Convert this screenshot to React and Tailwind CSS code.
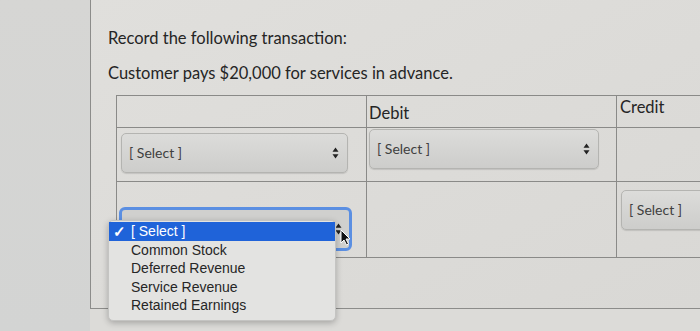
import React from "react";

const Arrows = ({ color = "#222" }) => (
  <svg width="7" height="12" viewBox="0 0 7 12" className="shrink-0">
    <path d="M3.5 0.5 L6.5 4.8 H0.5Z M3.5 11.5 L6.5 7.2 H0.5Z" fill={color} />
  </svg>
);

function SelectBox({ className = "", arrows = true }) {
  return (
    <div
      className={`flex items-center justify-between rounded-[5px] border border-[#b4b4b1] bg-gradient-to-b from-[#dcdcda] to-[#cdcdcb] shadow-[0_1px_1px_rgba(0,0,0,0.12)] pl-[7px] pr-[8px] ${className}`}
    >
      <span className="text-[14px] leading-none text-[#404040]">[ Select ]</span>
      {arrows && <Arrows />}
    </div>
  );
}

export default function App() {
  const items = ["Common Stock", "Deferred Revenue", "Service Revenue", "Retained Earnings"];
  return (
    <div className="relative flex h-[331px] w-[700px] overflow-hidden bg-[#dcdbd8] font-[Lato,'Liberation_Sans',sans-serif]">
      <div className="w-[90px] shrink-0 bg-gradient-to-b from-[#d6d6d4] to-[#d3d4d3]" />
      <div className="flex min-w-0 flex-1 flex-col">
        <div className="flex h-[309px] flex-col border-b border-l border-[#8c8c8a] bg-gradient-to-br from-[#e0dfdc] to-[#d9d8d5]">
          <div className="pl-[17px] pt-[28px] text-[16.5px] leading-[20px] text-[#252525]">
            <p>Record the following transaction:</p>
            <p className="mt-[15px]">Customer pays $20,000 for services in advance.</p>
          </div>
          <div className="ml-[25px] mt-[12px] w-[640px] border-l border-t border-[#8a8a88]">
            {/* header */}
            <div className="flex h-[32px]">
              <div className="w-[250px] border-b border-r border-[#8a8a88]" />
              <div className="w-[250px] border-b border-r border-[#8a8a88] pl-[2px] pt-[7px] text-[16.5px] leading-[20px] text-[#252525]">
                Debit
              </div>
              <div className="flex-1 border-b border-[#8a8a88] pl-[3px] pt-[1px] text-[16.5px] leading-[20px] text-[#252525]">
                Credit
              </div>
            </div>
            {/* row 1 */}
            <div className="flex h-[54px]">
              <div className="w-[250px] border-b border-r border-[#8a8a88] pl-[4px] pt-[5px]">
                <SelectBox className="h-[40px] w-[227px]" />
              </div>
              <div className="w-[250px] border-b border-r border-[#8a8a88] pl-[2px] pt-[1px]">
                <SelectBox className="h-[40px] w-[230px]" />
              </div>
              <div className="flex-1 border-b border-[#8a8a88]" />
            </div>
            {/* row 2 */}
            <div className="flex h-[76px]">
              <div className="w-[250px] border-b border-r border-[#8a8a88] pl-[2px] pt-[25px]">
                <div className="flex h-[44px] w-[233px] items-center justify-end rounded-[6px] border-[3px] border-[#5b8fe2] bg-[#d0d0ce] pr-[7px]">
                  <Arrows />
                </div>
              </div>
              <div className="w-[250px] border-b border-r border-[#8a8a88]" />
              <div className="flex-1 border-b border-[#8a8a88] pl-[4px] pt-[8px]">
                <SelectBox className="h-[40px] w-[120px]" arrows={false} />
              </div>
            </div>
          </div>
        </div>
      </div>

      {/* open dropdown menu */}
      <div className="absolute left-[108px] top-[220px] h-[101px] w-[228px] rounded-[5px] border border-[#c4c4c2] bg-[#e3e3e1] pt-[1px] shadow-[0_2px_6px_rgba(0,0,0,0.25)] font-['Liberation_Sans',Arial,sans-serif] text-[14px] text-[#262626]">
        <div className="flex h-[18.5px] items-center bg-[#1f63d9] text-white">
          <span className="w-[22px] pl-[4px] text-[15px] font-bold leading-none">✓</span>
          <span className="leading-none">[ Select ]</span>
        </div>
        {items.map((t) => (
          <div key={t} className="flex h-[18.5px] items-center pl-[22px] leading-none">
            {t}
          </div>
        ))}
      </div>

      {/* mouse cursor */}
      <svg className="absolute left-[340px] top-[229px]" width="11" height="17" viewBox="0 0 11 17">
        <path d="M1 1 L1 14 L4 11 L6.5 16 L8.5 15 L6 10 L10 10 Z" fill="#111" stroke="#fff" strokeWidth="1" />
      </svg>
    </div>
  );
}
